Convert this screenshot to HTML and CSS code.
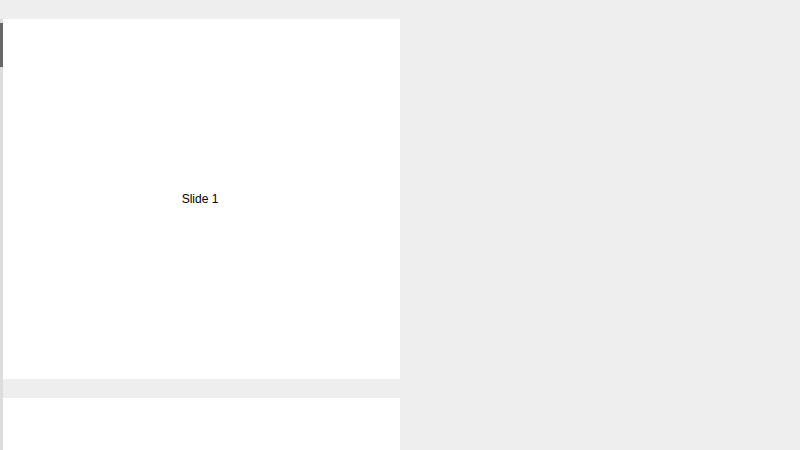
FILE: index.html
```html
<!DOCTYPE html>
<html>
<head>
<meta charset="utf-8">
<link rel="stylesheet" href="styles.css">
</head>
<body>
<div class="scrollbar"><div class="thumb"></div></div>
<div class="deck">
  <section class="slide">Slide 1</section>
  <section class="slide"></section>
</div>
</body>
</html>
```
FILE: styles.css
```css
html, body {
  margin: 0;
  padding: 0;
  background: #eeeeee;
  overflow: hidden;
  height: 450px;
  font-family: "Liberation Sans", Arial, sans-serif;
}
.deck {
  display: flex;
  flex-direction: column;
  gap: 19px;
  padding-top: 19px;
  height: 431px;
  overflow: hidden;
}
.slide {
  width: 400px;
  height: 360px;
  background: #ffffff;
  display: flex;
  align-items: center;
  justify-content: center;
  font-size: 12px;
  color: #000;
  flex-shrink: 0;
}
.scrollbar {
  position: fixed;
  left: 0;
  top: 19px;
  bottom: 0;
  width: 3px;
  background: #dddddd;
  z-index: 2;
}
.thumb {
  margin-top: 4px;
  height: 44px;
  width: 3px;
  background: #666666;
}
```
